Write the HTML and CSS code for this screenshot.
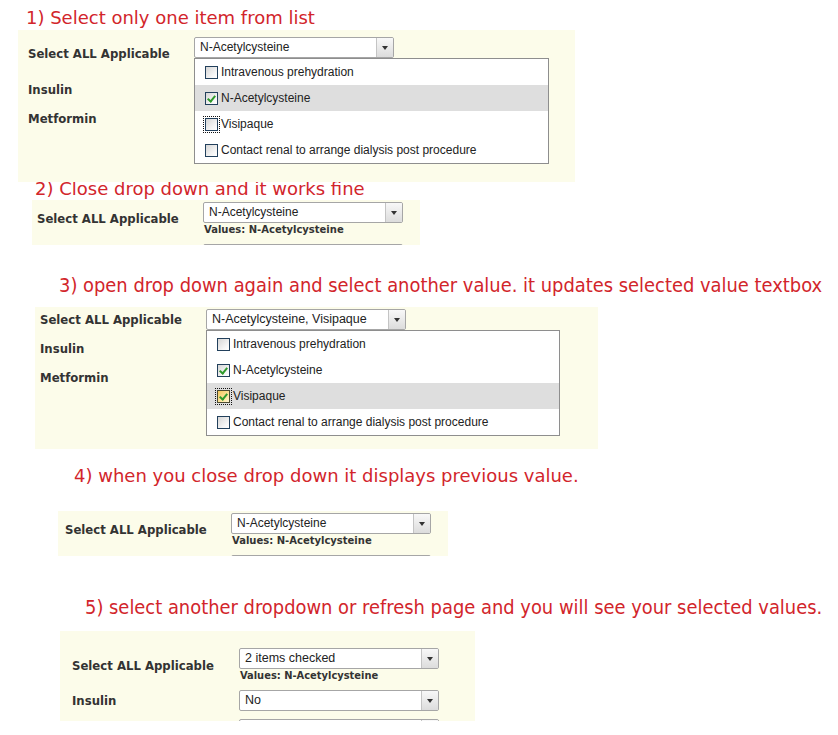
FILE: index.html
```html
<!DOCTYPE html>
<html>
<head>
<meta charset="utf-8">
<link rel="stylesheet" href="styles.css">
</head>
<body>
<div class="page">
  <div class="title t1">1) Select only one item from list</div>
  <div class="panel p1">
    <div class="row">
      <div class="label">Select ALL Applicable</div>
      <div class="field">
        <div class="select"><span class="sel-text">N-Acetylcysteine</span><span class="sel-btn"><i class="tri"></i></span></div>
        <div class="values-ph"></div>
        <ul class="list">
          <li><span class="cb"></span>Intravenous prehydration</li>
          <li class="hl"><span class="cb on"></span>N-Acetylcysteine</li>
          <li><span class="cb focus"></span>Visipaque</li>
          <li><span class="cb"></span>Contact renal to arrange dialysis post procedure</li>
        </ul>
      </div>
    </div>
    <div class="row"><div class="label">Insulin</div><div class="field"><div class="ph"></div></div></div>
    <div class="row"><div class="label">Metformin</div><div class="field"><div class="ph"></div></div></div>
  </div>

  <div class="title t2">2) Close drop down and it works fine</div>
  <div class="panel p2">
    <div class="row">
      <div class="label">Select ALL Applicable</div>
      <div class="field">
        <div class="select"><span class="sel-text">N-Acetylcysteine</span><span class="sel-btn"><i class="tri"></i></span></div>
        <div class="values">Values: N-Acetylcysteine</div>
      </div>
    </div>
    <div class="row"><div class="label"></div><div class="field"><div class="select"><span class="sel-text"></span><span class="sel-btn"><i class="tri"></i></span></div></div></div>
  </div>

  <div class="title t3 cond">3) open drop down again and select another value. it updates selected value textbox</div>
  <div class="panel p3 tall">
    <div class="row">
      <div class="label">Select ALL Applicable</div>
      <div class="field">
        <div class="select"><span class="sel-text">N-Acetylcysteine, Visipaque</span><span class="sel-btn"><i class="tri"></i></span></div>
        <ul class="list">
          <li><span class="cb"></span>Intravenous prehydration</li>
          <li><span class="cb on"></span>N-Acetylcysteine</li>
          <li class="hl"><span class="cb on hot focus"></span>Visipaque</li>
          <li><span class="cb"></span>Contact renal to arrange dialysis post procedure</li>
        </ul>
      </div>
    </div>
    <div class="row"><div class="label">Insulin</div><div class="field"><div class="ph"></div></div></div>
    <div class="row"><div class="label">Metformin</div><div class="field"><div class="ph"></div></div></div>
  </div>

  <div class="title t4">4) when you close drop down it displays previous value.</div>
  <div class="panel p4">
    <div class="row">
      <div class="label">Select ALL Applicable</div>
      <div class="field">
        <div class="select"><span class="sel-text">N-Acetylcysteine</span><span class="sel-btn"><i class="tri"></i></span></div>
        <div class="values">Values: N-Acetylcysteine</div>
      </div>
    </div>
    <div class="row"><div class="label"></div><div class="field"><div class="select"><span class="sel-text"></span><span class="sel-btn"><i class="tri"></i></span></div></div></div>
  </div>

  <div class="title t5 cond">5) select another dropdown or refresh page and you will see your selected values.</div>
  <div class="panel p5 tall">
    <div class="row">
      <div class="label">Select ALL Applicable</div>
      <div class="field">
        <div class="select"><span class="sel-text">2 items checked</span><span class="sel-btn"><i class="tri"></i></span></div>
        <div class="values">Values: N-Acetylcysteine</div>
      </div>
    </div>
    <div class="row"><div class="label">Insulin</div><div class="field"><div class="select"><span class="sel-text">No</span><span class="sel-btn"><i class="tri"></i></span></div></div></div>
    <div class="row"><div class="label"></div><div class="field"><div class="select"><span class="sel-text"></span><span class="sel-btn"><i class="tri"></i></span></div></div></div>
  </div>
</div>
</body>
</html>
```
FILE: styles.css
```css
html, body {
  margin: 0;
  padding: 0;
  background: #ffffff;
}
.page {
  display: flex;
  flex-direction: column;
  align-items: flex-start;
  width: 838px;
  height: 735px;
  overflow: hidden;
}
.title {
  font-family: "DejaVu Sans", Verdana, sans-serif;
  font-size: 18px;
  line-height: 22px;
  color: #d2252b;
  white-space: nowrap;
}
.title.cond {
  font-family: "DejaVu Sans Condensed", "DejaVu Sans", sans-serif;
  font-stretch: condensed;
  font-size: 19.9px;
}
.t1 { margin: 7px 0 0 26px; }
.t2 { margin: -4px 0 0 35px; }
.t3 { margin: 30px 0 0 59px; }
.t4 { margin: 16px 0 0 74px; }
.t5 { margin: 41px 0 0 85px; }

.panel {
  background: #fcfcea;
  box-sizing: border-box;
  overflow: hidden;
  position: relative;
}
.p1 { margin: 1px 0 0 18px; width: 557px; height: 152px; padding: 7px 0 0 10px; overflow: visible; }
.p2 { margin: 0 0 0 32px; width: 388px; height: 45px; padding: 2px 0 0 5px; }
.p3 { margin: 10px 0 0 35px; width: 563px; height: 142px; padding: 2px 0 0 5px; overflow: visible; }
.p4 { margin: 24px 0 0 58px; width: 390px; height: 45px; padding: 2px 0 0 7px; }
.p5 { margin: 12px 0 0 60px; width: 415px; height: 90px; padding: 17px 0 0 12px; }

.row {
  display: flex;
  align-items: center;
  margin-bottom: 8px;
}
.label {
  width: 166px;
  flex: none;
  font-family: "DejaVu Sans", Verdana, sans-serif;
  font-weight: bold;
  font-size: 11.7px;
  color: #333333;
  white-space: nowrap;
}
.p5 .label { width: 167px; }
.tall .label {
  font-family: "DejaVu Sans Condensed", "DejaVu Sans", sans-serif;
  font-stretch: condensed;
  font-size: 13px;
}
.field {
  position: relative;
  width: 200px;
}
.ph { height: 21px; }
.values-ph { height: 13px; }
.select {
  box-sizing: border-box;
  width: 200px;
  height: 21px;
  border: 1px solid #a6a6a6;
  border-radius: 2px;
  background: #ffffff;
  display: flex;
  overflow: hidden;
}
.sel-text {
  flex: 1;
  padding-left: 5px;
  font-family: "Liberation Sans", Arial, sans-serif;
  font-size: 12px;
  line-height: 19px;
  color: #222222;
  white-space: nowrap;
  overflow: hidden;
}
.tall .sel-text { font-size: 12.5px; }
.sel-btn {
  flex: none;
  width: 16px;
  border-left: 1px solid #c4c4c4;
  background: linear-gradient(#f8f8f8, #dcdcdc);
  display: flex;
  align-items: center;
  justify-content: center;
}
.tri {
  width: 0;
  height: 0;
  border-left: 3.5px solid transparent;
  border-right: 3.5px solid transparent;
  border-top: 4px solid #333333;
}
.values {
  font-family: "DejaVu Sans", Verdana, sans-serif;
  font-weight: bold;
  font-size: 10px;
  line-height: 13px;
  color: #333333;
  padding-left: 1px;
  white-space: nowrap;
}
.tall .values {
  font-family: "DejaVu Sans Condensed", "DejaVu Sans", sans-serif;
  font-stretch: condensed;
  font-size: 11px;
}
.list {
  position: absolute;
  top: 21px;
  left: 0;
  z-index: 2;
  width: 355px;
  box-sizing: border-box;
  margin: 0;
  padding: 0;
  list-style: none;
  background: #ffffff;
  border: 1px solid #8e8e8e;
}
.p3 .list { width: 354px; }
.list li {
  height: 26px;
  display: flex;
  align-items: center;
  padding-left: 10px;
  font-family: "Liberation Sans", Arial, sans-serif;
  font-size: 12px;
  color: #222222;
  white-space: nowrap;
}
.list li.hl { background: #dedede; }
.cb {
  flex: none;
  box-sizing: border-box;
  width: 13px;
  height: 13px;
  margin-right: 3px;
  border: 1px solid #22405c;
  background: linear-gradient(135deg, #d6d6d6, #f6f6f6 70%, #ffffff);
  position: relative;
}
.cb.on::after {
  content: "";
  position: absolute;
  left: 3px;
  top: 1px;
  width: 3px;
  height: 6px;
  border-right: 2px solid #2f9a2b;
  border-bottom: 2px solid #2f9a2b;
  transform: rotate(40deg);
}
.cb.hot {
  border-color: #4a4a30;
  background: linear-gradient(135deg, #f3c75c, #fde9a8 70%, #fff6d6);
}
.cb.focus {
  outline: 1px dotted #111111;
  outline-offset: 1px;
}
```
